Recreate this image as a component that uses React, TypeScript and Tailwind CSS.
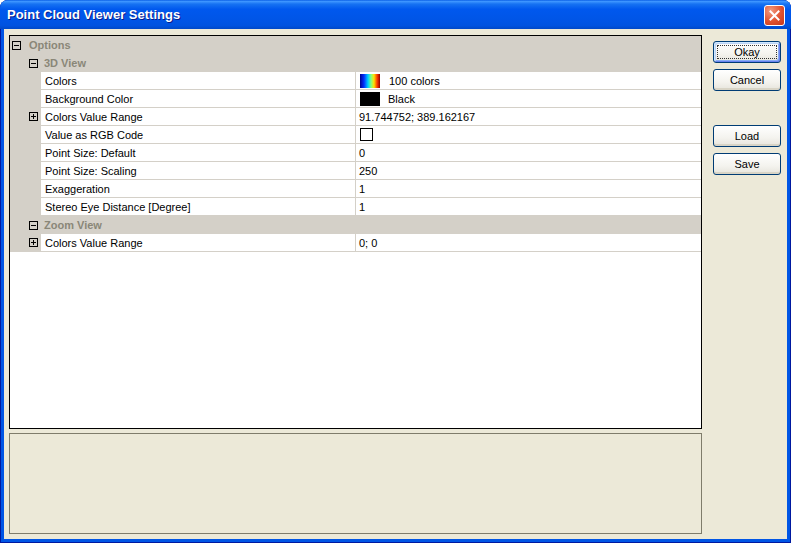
import React from "react";

type Row =
  | { kind: "cat"; label: string; level: number }
  | { kind: "prop"; label: string; value: string; expand?: boolean; swatch?: "colors" | "black" | "check" };

const rows: Row[] = [
  { kind: "cat", label: "Options", level: 0 },
  { kind: "cat", label: "3D View", level: 1 },
  { kind: "prop", label: "Colors", value: "100 colors", swatch: "colors" },
  { kind: "prop", label: "Background Color", value: "Black", swatch: "black" },
  { kind: "prop", label: "Colors Value Range", value: "91.744752; 389.162167", expand: true },
  { kind: "prop", label: "Value as RGB Code", value: "", swatch: "check" },
  { kind: "prop", label: "Point Size: Default", value: "0" },
  { kind: "prop", label: "Point Size: Scaling", value: "250" },
  { kind: "prop", label: "Exaggeration", value: "1" },
  { kind: "prop", label: "Stereo Eye Distance [Degree]", value: "1" },
  { kind: "cat", label: "Zoom View", level: 1 },
  { kind: "prop", label: "Colors Value Range", value: "0; 0", expand: true },
];

function Glyph({ plus }: { plus?: boolean }) {
  return (
    <span className="relative block w-[9px] h-[9px] border border-black">
      <span className="absolute left-[1px] top-[3px] w-[5px] h-[1px] bg-black" />
      {plus && <span className="absolute left-[3px] top-[1px] w-[1px] h-[5px] bg-black" />}
    </span>
  );
}

function XpButton({ label, def, className = "" }: { label: string; def?: boolean; className?: string }) {
  return (
    <button
      className={`relative block w-[68px] h-[22px] rounded-[3px] border border-[#003c74] bg-[linear-gradient(to_bottom,#ffffff,#f4f3ee_60%,#e6e4dc)] text-[11px] leading-[20px] text-black ${className} ${
        def
          ? "shadow-[inset_1px_1px_0_#cee7ff,inset_-1px_-1px_0_#6982ee,inset_2px_2px_0_#bcd4f6,inset_-2px_-2px_0_#89adf4]"
          : "shadow-[inset_0_-2px_0_#d8d4c6]"
      }`}
    >
      {def && <span className="absolute inset-[3px] border border-dotted border-[#333]" />}
      <span className="relative">{label}</span>
    </button>
  );
}

export default function App() {
  return (
    <div className="w-[791px] h-[543px] bg-white font-['Liberation_Sans',Arial,sans-serif]">
      <div className="w-full h-full flex flex-col rounded-t-[8px] overflow-hidden bg-[#0055e5] shadow-[inset_1px_0_#0019a0,inset_-1px_0_#0019a0,inset_0_-1px_#0019a0]">
        {/* Title bar */}
        <div className="h-[29px] shrink-0 flex items-center justify-between bg-[linear-gradient(to_bottom,#0a5fe6_0%,#3d95ff_5%,#1672f2_14%,#0058ee_32%,#0055e6_70%,#0053e0_88%,#0049c8_100%)]">
          <span className="pl-[7px] pt-[1px] text-[13px] font-bold text-white [text-shadow:1px_1px_#0a1c8a]">
            Point Cloud Viewer Settings
          </span>
          <div className="mr-[6px] mt-[1px] w-[21px] h-[21px] rounded-[3px] border border-white bg-[radial-gradient(circle_at_30%_25%,#f29b80,#e0512f_55%,#c5371a)] flex items-center justify-center">
            <svg width="11" height="11" viewBox="0 0 11 11">
              <path d="M1.5 1.5 L9.5 9.5 M9.5 1.5 L1.5 9.5" stroke="white" strokeWidth="2" strokeLinecap="square" />
            </svg>
          </div>
        </div>

        {/* Client */}
        <div className="flex-1 mx-[4px] mb-[4px] bg-[#ece9d8] flex pt-[6px] pl-[5px]">
          <div className="w-[693px] flex flex-col">
            <div className="h-[394px] border border-black bg-white flex flex-col text-[11px] text-black">
              {rows.map((r, i) =>
                r.kind === "cat" ? (
                  <div key={i} className="h-[18px] shrink-0 bg-[#d4d0c8] flex items-center">
                    <span className={r.level === 0 ? "ml-[2px]" : "ml-[19px]"}>
                      <Glyph />
                    </span>
                    <span className={`pt-[1px] font-bold text-[#8a8778] ${r.level === 0 ? "ml-[8px]" : "ml-[6px]"}`}>{r.label}</span>
                  </div>
                ) : (
                  <div key={i} className="h-[18px] shrink-0 flex">
                    <div className="w-[31px] shrink-0 bg-[#d4d0c8] flex items-center">
                      {r.expand && (
                        <span className="ml-[19px] mb-[1px]">
                          <Glyph plus />
                        </span>
                      )}
                    </div>
                    <div className="flex-1 flex border-b border-[#d4d0c8]">
                      <div className="w-[315px] shrink-0 border-r border-[#d4d0c8] pl-[4px] pt-[1px] flex items-center">{r.label}</div>
                      <div className="flex-1 pl-[3px] flex items-center">
                        {r.swatch === "colors" && (
                          <span className="ml-[1px] mr-[9px] w-[20px] h-[14px] bg-[linear-gradient(to_right,#00008f,#0030ff_20%,#00d0ff_40%,#80ff80_55%,#ffe000_70%,#ff4000_85%,#900000)]" />
                        )}
                        {r.swatch === "black" && <span className="ml-[1px] mr-[8px] w-[20px] h-[14px] bg-black" />}
                        {r.swatch === "check" && <span className="ml-[1px] w-[13px] h-[13px] border border-black bg-white" />}
                        <span className="pt-[1px]">{r.value}</span>
                      </div>
                    </div>
                  </div>
                )
              )}
            </div>
            <div className="mt-[4px] h-[101px] border border-[#7f7c6b]" />
          </div>

          <div className="ml-[11px] pt-[6px] flex flex-col">
            <XpButton label="Okay" def />
            <XpButton label="Cancel" className="mt-[6px]" />
            <XpButton label="Load" className="mt-[34px]" />
            <XpButton label="Save" className="mt-[6px]" />
          </div>
        </div>
      </div>
    </div>
  );
}
